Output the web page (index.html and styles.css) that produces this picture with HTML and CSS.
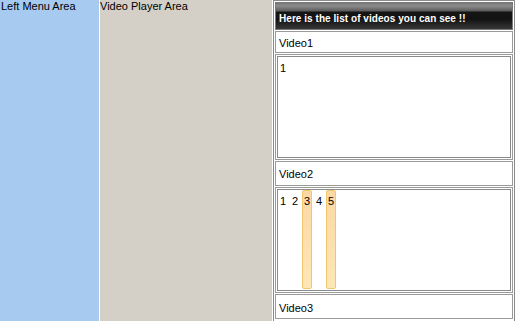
FILE: index.html
```html
<!DOCTYPE html>
<html>
<head>
<meta charset="utf-8">
<link rel="stylesheet" href="styles.css">
</head>
<body>
<div class="page">
  <div class="left-menu">Left Menu Area</div>
  <div class="player">Video Player Area</div>
  <div class="list">
    <div class="cell header">Here is the list of videos you can see !!</div>
    <div class="cell title t1">Video1</div>
    <div class="cell box">
      <div class="strip">
        <span class="item">1</span>
      </div>
    </div>
    <div class="cell title t2">Video2</div>
    <div class="cell box">
      <div class="strip">
        <span class="item">1</span>
        <span class="item">2</span>
        <span class="item selected">3</span>
        <span class="item">4</span>
        <span class="item selected">5</span>
      </div>
    </div>
    <div class="cell title t3">Video3</div>
  </div>
</div>
</body>
</html>
```

FILE: styles.css
```css
html, body {
  margin: 0;
  padding: 0;
  background: #ffffff;
  overflow: hidden;
}

.page {
  display: grid;
  grid-template-columns: 99px 172px 242px;
  column-gap: 1px;
  height: 321px;
  overflow: hidden;
  font-family: "Liberation Sans", Arial, sans-serif;
  font-size: 11px;
  line-height: 13px;
  color: #000;
}

.left-menu {
  background: #a6caf0;
  padding-left: 1px;
}

.player {
  background: #d4d0c8;
}

.list {
  border: 1px solid #8a8a8a;
  border-bottom: none;
  background: #ffffff;
  padding: 1px;
  display: flex;
  flex-direction: column;
  gap: 1px;
  min-height: 0;
  overflow: hidden;
}

.cell {
  border: 1px solid #9a9a9a;
  flex: none;
}

.header {
  box-sizing: border-box;
  height: 28px;
  padding: 9px 0 0 3px;
  font-size: 10px;
  font-weight: bold;
  color: #ffffff;
  letter-spacing: 0.05px;
  background: linear-gradient(#7a7a7a 0px, #8c8c8c 3px, #5a5a5a 8px, #151515 9px, #121212 16px, #3a3a3a 27px);
  border-color: #777;
}

.title {
  box-sizing: border-box;
  padding: 6px 0 0 3px;
  background: #fff;
}

.t1 { height: 22px; padding-top: 5px; }
.t2 { height: 25px; padding-top: 6px; }
.t3 { height: 25px; padding-top: 7px; }

.box {
  box-sizing: border-box;
  height: 106px;
  padding: 1px;
  background: #fff;
}

.strip {
  box-sizing: border-box;
  height: 102px;
  border: 1px solid #8a8a8a;
  display: flex;
  gap: 2px;
  padding: 0 0 1px 0;
  align-items: stretch;
}

.item {
  box-sizing: border-box;
  width: 10px;
  border: 1px solid transparent;
  border-radius: 2px;
  text-align: center;
  padding-top: 4px;
}

.item.selected {
  border-color: #efc86e;
  background: linear-gradient(#fcd7a6, #fde7b6);
}
```
